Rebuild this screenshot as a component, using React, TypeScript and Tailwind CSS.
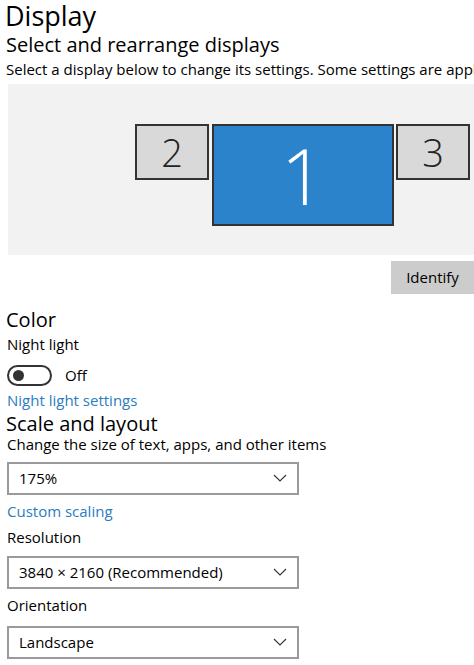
import React from "react";

function Chevron() {
  return (
    <svg width="14" height="8" viewBox="0 0 14 8" fill="none" stroke="#333" strokeWidth="1.1">
      <path d="M1 1 L7 7 L13 1" />
    </svg>
  );
}

function Dropdown({ value }: { value: string }) {
  return (
    <div className="mx-[7px] flex h-[33px] w-[292px] items-center justify-between border-2 border-[#9a9a9a] bg-white pl-[10px] pr-[10px]">
      <span className="text-[15px] text-black">{value}</span>
      <Chevron />
    </div>
  );
}

export default function App() {
  return (
    <div
      className="h-[665px] w-[474px] overflow-hidden bg-white text-black"
      style={{ fontFamily: '"Open Sans", "Noto Sans", sans-serif' }}
    >
      <div className="pl-[5px] text-[27px] leading-[32px]">Display</div>
      <div className="pl-[6px] text-[20px] leading-[26px]">Select and rearrange displays</div>
      <div className="overflow-hidden whitespace-nowrap pl-[6px] text-[15px] leading-[22px]">
        Select a display below to change its settings. Some settings are applied to all displays.
      </div>

      <div className="ml-[8px] mt-[4px] flex h-[171px] items-start bg-[#f2f2f2] pl-[127px] pt-[40px]">
        <div className="flex h-[56px] w-[74px] items-center justify-center border-2 border-[#333] bg-[#d9d9d9] text-[38px] font-light leading-none text-[#222]">
          2
        </div>
        <div className="ml-[3px] flex h-[102px] w-[182px] items-center justify-center border-2 border-[#333] bg-[#2b83cc] text-[78px] font-light leading-none text-white">
          1
        </div>
        <div className="ml-[2px] flex h-[56px] w-[74px] items-center justify-center border-2 border-[#333] bg-[#d9d9d9] text-[38px] font-light leading-none text-[#222]">
          3
        </div>
      </div>

      <div className="mt-[6px] flex justify-end">
        <div className="flex h-[33px] w-[83px] items-center justify-center bg-[#cccccc] text-[15px]">Identify</div>
      </div>

      <div className="mt-[12px] pl-[6px] text-[20px] leading-[28px]">Color</div>
      <div className="pl-[7px] text-[15px] leading-[20px]">Night light</div>
      <div className="mt-[10px] flex items-center pl-[7px]">
        <div className="flex h-[21px] w-[45px] items-center rounded-full border-2 border-[#333] pl-[4px]">
          <div className="h-[11px] w-[11px] rounded-full bg-[#333]" />
        </div>
        <span className="ml-[13px] text-[15px]">Off</span>
      </div>
      <div className="mt-[1px] pl-[7px] text-[15px] leading-[24px] text-[#2b7cc1]">Night light settings</div>
      <div className="pl-[6px] text-[20px] leading-[23px]">Scale and layout</div>
      <div className="pl-[7px] text-[15px] leading-[18px]">Change the size of text, apps, and other items</div>

      <div className="mt-[9px]">
        <Dropdown value="175%" />
      </div>
      <div className="mt-[5px] pl-[7px] text-[15px] leading-[22px] text-[#2b7cc1]">Custom scaling</div>
      <div className="mt-[4px] pl-[7px] text-[15px] leading-[22px]">Resolution</div>
      <div className="mt-[8px]">
        <Dropdown value="3840 × 2160 (Recommended)" />
      </div>
      <div className="mt-[5px] pl-[7px] text-[15px] leading-[22px]">Orientation</div>
      <div className="mt-[10px]">
        <Dropdown value="Landscape" />
      </div>
    </div>
  );
}
